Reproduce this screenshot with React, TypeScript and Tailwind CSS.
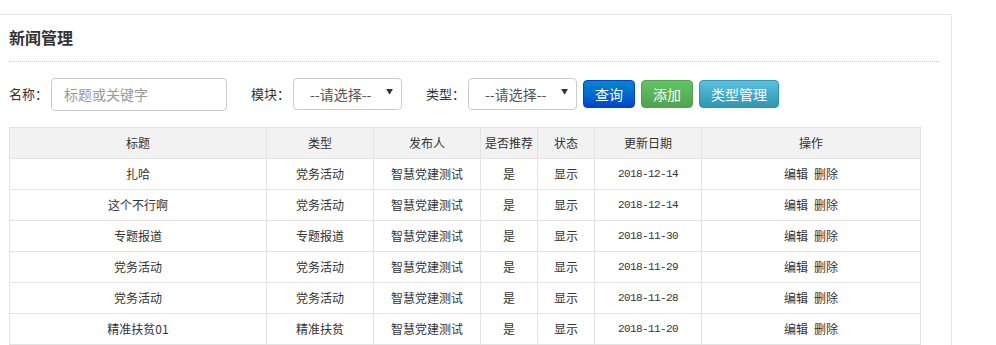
import React from 'react';

const ROWS = [
  { title: '扎哈', type: '党务活动', date: '2018-12-14' },
  { title: '这个不行啊', type: '党务活动', date: '2018-12-14' },
  { title: '专题报道', type: '专题报道', date: '2018-11-30' },
  { title: '党务活动', type: '党务活动', date: '2018-11-29' },
  { title: '党务活动', type: '党务活动', date: '2018-11-28' },
  { title: '精准扶贫01', type: '精准扶贫', date: '2018-11-20' },
];

const FONT = "font-['SimSun','Noto_Sans_CJK_SC',sans-serif]";

const SelectBox = () => (
  <div className="relative flex h-[32px] w-[109px] items-center rounded-[4px] border border-[#cccccc] bg-white pl-[16px] text-[14px] text-[#555555]">
    --请选择--
    <span className="absolute right-[8px] top-[7px] text-[7px] text-[#333333]">▼</span>
  </div>
);

export default function App() {
  const th = 'h-[31px] border border-[#e3e3e3] bg-[#f2f2f2] text-center font-normal';
  const td = 'h-[31px] border border-[#e3e3e3] text-center';

  return (
    <div className={`min-h-screen bg-white pt-[14px] text-[#333333] ${FONT}`}>
      <div className="box-border w-[952px] border-r border-t border-[#e6e6e6] pl-[9px] pr-[12px] pt-[11px]">
        {/* Header */}
        <h2 className="h-[35px] text-[16px] font-bold leading-[22px] text-[#333333]">新闻管理</h2>
        <div className="border-t border-dotted border-[#c8c8c8]" />

        {/* Filters */}
        <div className="mt-[15px] flex h-[34px] items-center text-[13px]">
          <span className="w-[42px]">名称：</span>
          <div className="flex h-[33px] w-[176px] items-center rounded-[4px] border border-[#cccccc] pl-[12px] text-[14px] text-[#999999]">
            标题或关键字
          </div>
          <span className="ml-[24px] w-[42px]">模块：</span>
          <SelectBox />
          <span className="ml-[24px] w-[42px]">类型：</span>
          <SelectBox />
          <div className="ml-[6px] flex gap-[6px] text-[14px] text-white">
            <button className="h-[28px] w-[52px] rounded-[4px] border border-[#0044cc] bg-gradient-to-b from-[#0088cc] to-[#0044cc]">
              查询
            </button>
            <button className="h-[28px] w-[52px] rounded-[4px] border border-[#51a351] bg-gradient-to-b from-[#62c462] to-[#51a351]">
              添加
            </button>
            <button className="h-[28px] w-[80px] rounded-[4px] border border-[#2f96b4] bg-gradient-to-b from-[#5bc0de] to-[#2f96b4]">
              类型管理
            </button>
          </div>
        </div>

        {/* Table */}
        <table className="mt-[16px] w-[911px] table-fixed border-collapse text-[12px]">
          <colgroup>
            <col className="w-[257px]" />
            <col className="w-[107px]" />
            <col className="w-[107px]" />
            <col className="w-[57px]" />
            <col className="w-[57px]" />
            <col className="w-[107px]" />
            <col className="w-[219px]" />
          </colgroup>
          <thead>
            <tr>
              <th className={th}>标题</th>
              <th className={th}>类型</th>
              <th className={th}>发布人</th>
              <th className={th}>是否推荐</th>
              <th className={th}>状态</th>
              <th className={th}>更新日期</th>
              <th className={th}>操作</th>
            </tr>
          </thead>
          <tbody>
            {ROWS.map((r, i) => (
              <tr key={i}>
                <td className={td}>{r.title}</td>
                <td className={td}>{r.type}</td>
                <td className={td}>智慧党建测试</td>
                <td className={td}>是</td>
                <td className={td}>显示</td>
                <td className={`${td} font-['Liberation_Mono',monospace] text-[11px] tracking-[-0.6px]`}>{r.date}</td>
                <td className={td}>
                  <span>编辑</span>
                  <span className="ml-[6px]">删除</span>
                </td>
              </tr>
            ))}
          </tbody>
        </table>
      </div>
    </div>
  );
}
